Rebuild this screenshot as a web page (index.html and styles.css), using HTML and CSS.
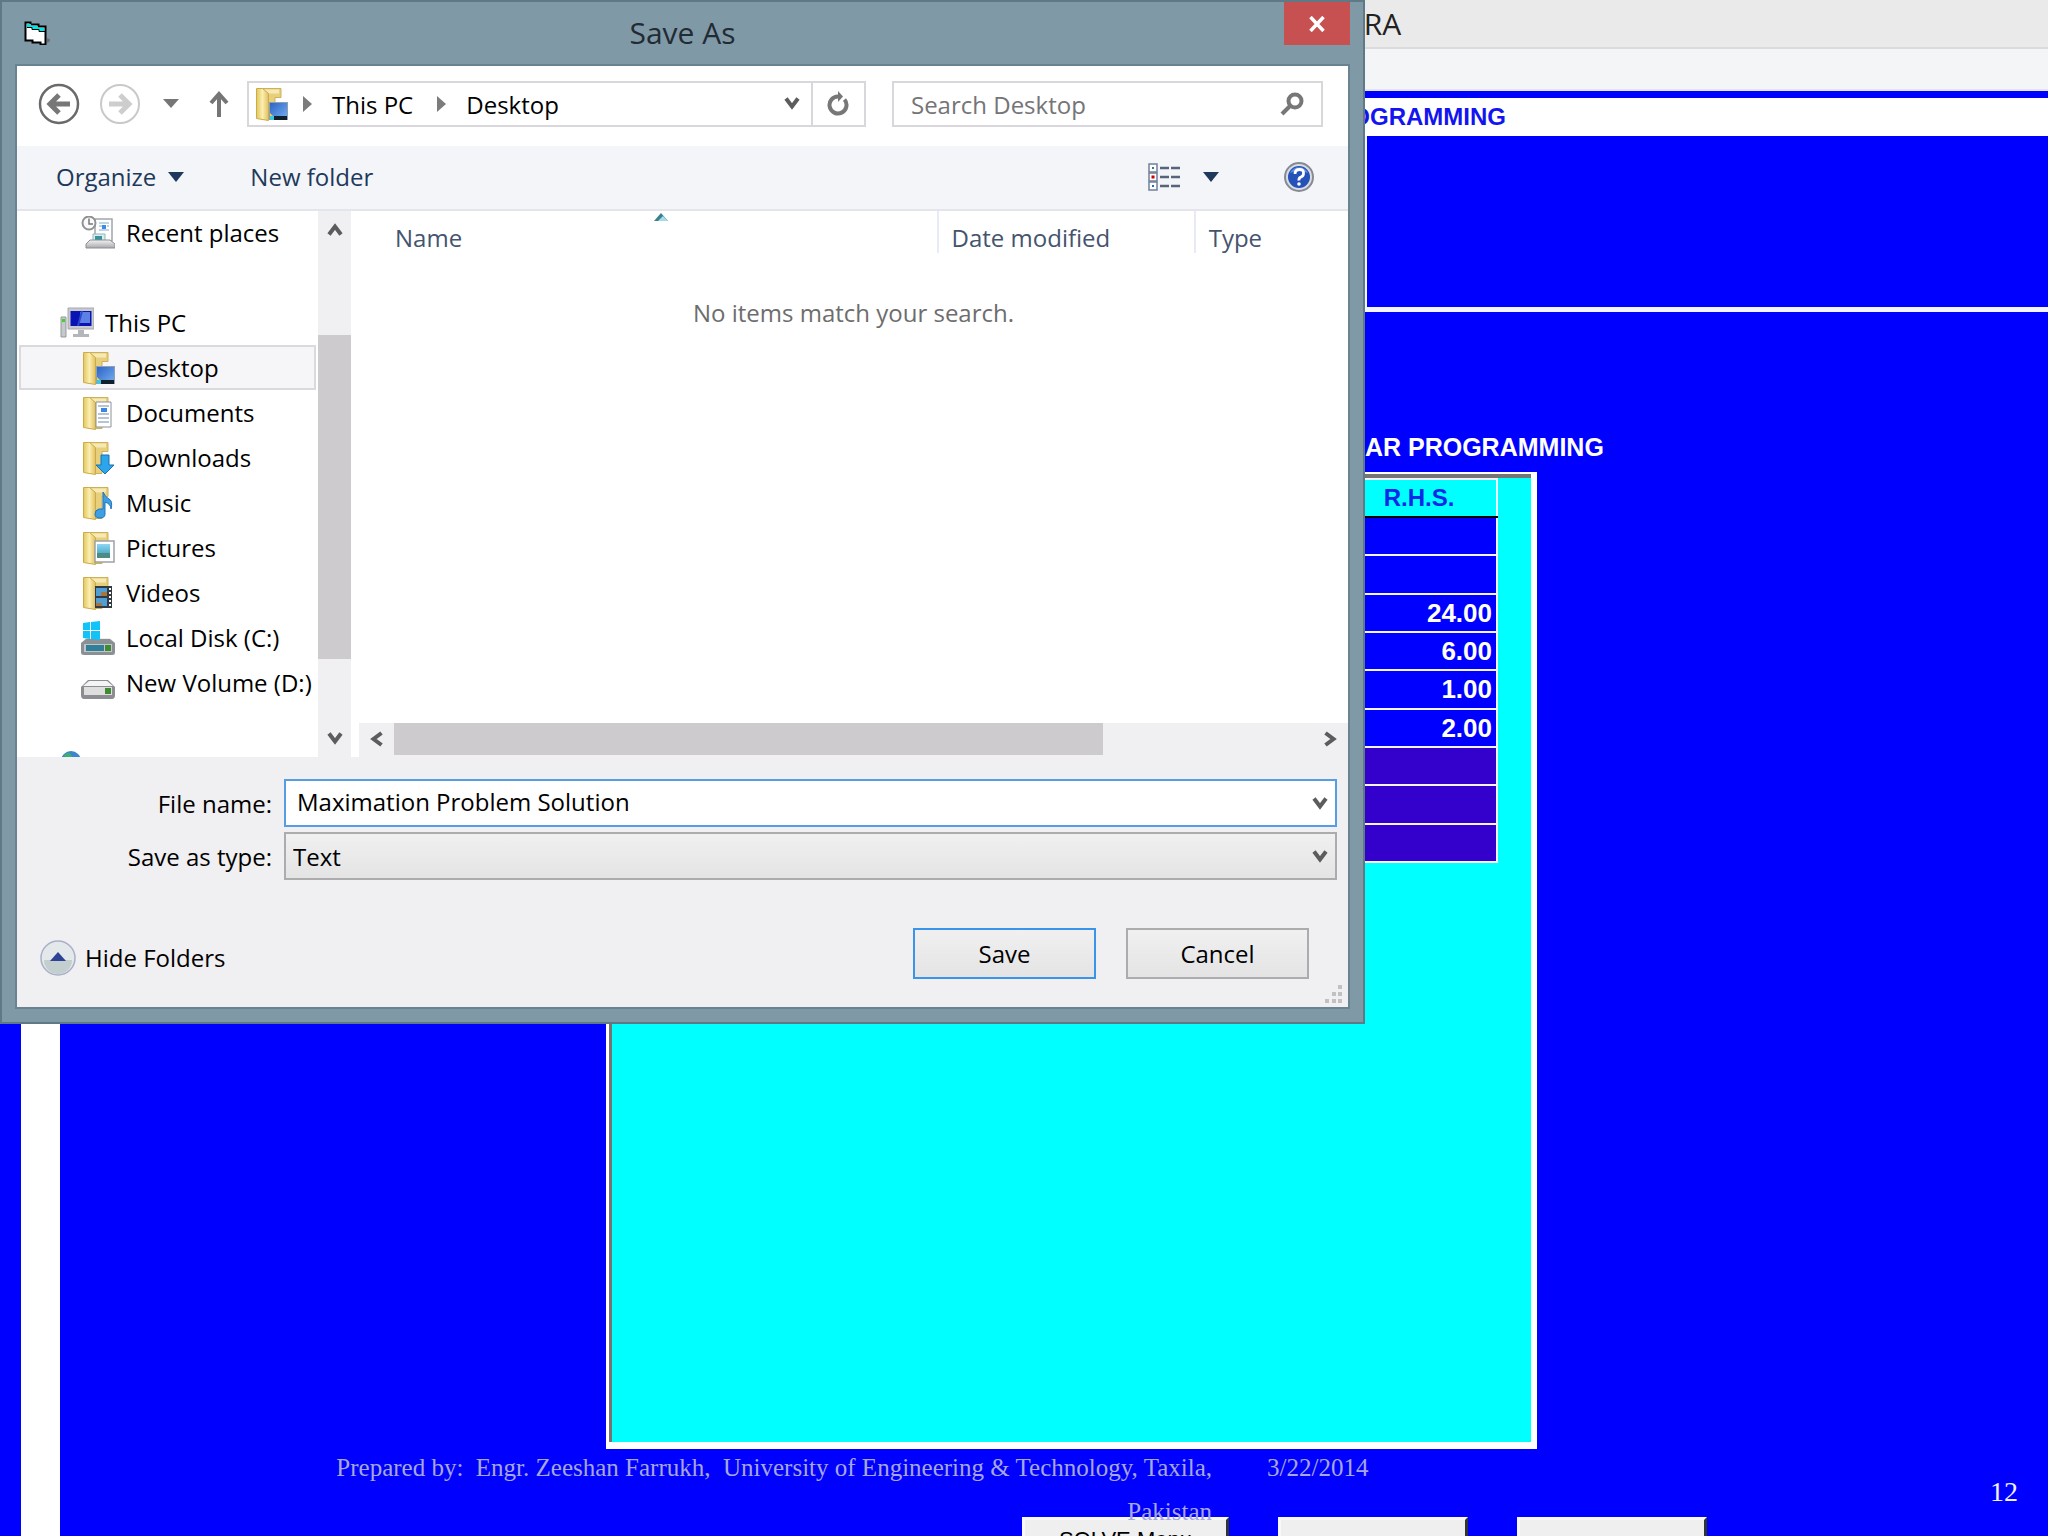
FILE: index.html
```html
<!DOCTYPE html>
<html lang="en">
<head>
    <meta charset="utf-8">
    <title>Save As</title>
    <link rel="stylesheet" href="styles.css">
</head>
<body>
    <!-- shared icon shapes -->
    <svg class="defs" aria-hidden="true">
        <defs>
            <linearGradient id="gold" x1="0" x2="1" y1="0" y2="0">
                <stop offset="0" stop-color="#e2c75e"/>
                <stop offset=".5" stop-color="#fbeeb0"/>
                <stop offset="1" stop-color="#e0c060"/>
            </linearGradient>
            <linearGradient id="screen" x1="0" x2="1" y1="0" y2="1">
                <stop offset="0" stop-color="#2a62c4"/>
                <stop offset="1" stop-color="#78b0f2"/>
            </linearGradient>
            <linearGradient id="metal" x1="0" x2="0" y1="0" y2="1">
                <stop offset="0" stop-color="#f2f2f2"/>
                <stop offset="1" stop-color="#a9a9ad"/>
            </linearGradient>
            <linearGradient id="sky" x1="0" x2="0" y1="0" y2="1">
                <stop offset="0" stop-color="#8fd6f4"/>
                <stop offset="1" stop-color="#2f9bb4"/>
            </linearGradient>
        </defs>
        <symbol id="folder" viewBox="0 0 34 34">
            <path d="M8 1.500h19v9h-6v22H8z" fill="#e8cf7c" stroke="#cdb05a"/>
            <path d="M9 2.500h16v4H9z" fill="#f6e9b4"/>
            <path d="M2.500 1.500h6l6 5V33.500L2.500 31.500z" fill="url(#gold)" stroke="#cdac48"/>
        </symbol>
        <symbol id="chev" viewBox="0 0 16 14">
            <path d="M2 1.500l6 8 6-8" fill="none" stroke="#5c5c5c" stroke-width="4"/>
        </symbol>
        <symbol id="desktop" viewBox="0 0 34 34">
            <use href="#folder"/>
            <rect x="15.500" y="15.500" width="18" height="17" fill="url(#screen)" stroke="#8f9fb4"/>
            <path d="M20 29h13v4H20z" fill="#10202c"/>
            <path d="M16 29h4v4h-4z" fill="#3ec5e0"/>
            <path d="M16 26l3 3h-3z" fill="#f2d042"/>
        </symbol>
    </svg>

    <div class="app">
        <header class="app-title">TORA</header>
        <div class="app-menu"></div>
        <div class="workspace">
            <div class="strip"></div>
            <main class="form">
                <h1 class="banner">LINEAR PROGRAMMING</h1>
                <div class="panel"></div>
                <h2 class="caption">LINEAR PROGRAMMING</h2>
                <div class="frame">
                    <table class="grid">
                        <thead><tr><th></th><th>R.H.S.</th></tr></thead>
                        <tbody>
                            <tr><td></td><td></td></tr>
                            <tr><td></td><td></td></tr>
                            <tr><td></td><td>24.00</td></tr>
                            <tr><td></td><td>6.00</td></tr>
                            <tr><td></td><td>1.00</td></tr>
                            <tr><td></td><td>2.00</td></tr>
                            <tr class="bound"><td></td><td></td></tr>
                            <tr class="bound"><td></td><td></td></tr>
                            <tr class="bound"><td></td><td></td></tr>
                        </tbody>
                    </table>
                </div>
                <div class="commands">
                    <button class="cmd cmd-wide">SOLVE Menu</button>
                    <button class="cmd" aria-label="Command 2"></button>
                    <button class="cmd" aria-label="Command 3"></button>
                </div>
            </main>
        </div>
    </div>

    <footer class="slide-note">
        <p class="credit">Prepared by:&nbsp; Engr. Zeeshan Farrukh,&nbsp; University of Engineering &amp; Technology, Taxila,<br>Pakistan</p>
        <p class="date">3/22/2014</p>
        <p class="page">12</p>
    </footer>

    <section class="dialog" role="dialog" aria-labelledby="dialog-title">
        <header class="titlebar">
            <svg class="form-icon" viewBox="0 0 26 24">
                <path d="M23 17l5 2-5 3z" fill="#6b6f72"/>
                <path d="M1.500 1.500h5v2h8v2h7v18h-5v-2h-8v-2h-7z" fill="#fff" stroke="#000" stroke-width="2"/>
                <path d="M3 3h4v2h7v2h6v3h-5V8H8V6H3z" fill="#00e5e5"/>
                <path d="M3 6.500h5v2h7v2h6" fill="none" stroke="#000" stroke-width="1"/>
            </svg>
            <h2 class="dialog-title" id="dialog-title">Save As</h2>
            <button class="close" aria-label="Close">
                <svg viewBox="0 0 18 16"><path d="M2.500 1l13 14M15.500 1l-13 14" stroke="#fff" stroke-width="3.500"/></svg>
            </button>
        </header>

        <div class="dialog-body">
            <div class="address-row">
                <button class="round" aria-label="Back">
                    <svg viewBox="0 0 42 42"><circle cx="21" cy="21" r="19" fill="#fff" stroke="#6a6a6a" stroke-width="2.500"/><path d="M32 21H13M21 12l-9 9 9 9" fill="none" stroke="#777" stroke-width="5"/></svg>
                </button>
                <button class="round" aria-label="Forward">
                    <svg viewBox="0 0 42 42"><circle cx="21" cy="21" r="19" fill="#fff" stroke="#c9c9c9" stroke-width="2"/><path d="M10 21h19M21 12l9 9-9 9" fill="none" stroke="#cdcdcd" stroke-width="5"/></svg>
                </button>
                <button class="plain recent" aria-label="Recent locations">
                    <svg viewBox="0 0 16 10"><path d="M0 0h16l-8 9z" fill="#767676"/></svg>
                </button>
                <button class="plain up" aria-label="Up">
                    <svg viewBox="0 0 20 26"><path d="M10 26V3M2 12l8-9 8 9" fill="none" stroke="#757575" stroke-width="4"/></svg>
                </button>
                <div class="address">
                    <svg class="icon" viewBox="0 0 34 34"><use href="#desktop"/></svg>
                    <svg class="crumb-arrow" viewBox="0 0 9 16"><path d="M0 0l9 8-9 8z" fill="#7c7c7c"/></svg>
                    <a class="crumb" href="#">This PC</a>
                    <svg class="crumb-arrow" viewBox="0 0 9 16"><path d="M0 0l9 8-9 8z" fill="#7c7c7c"/></svg>
                    <a class="crumb" href="#">Desktop</a>
                    <button class="plain history" aria-label="Previous locations"><svg class="chev" viewBox="0 0 16 14"><use href="#chev"/></svg></button>
                    <button class="plain refresh" aria-label="Refresh">
                        <svg viewBox="0 0 22 26"><path d="M17.500 8.500a8.500 8.500 0 1 1-6-3" fill="none" stroke="#777" stroke-width="4"/><path d="M11 0l5 5.500-5 5.500z" fill="#777"/></svg>
                    </button>
                </div>
                <div class="search">
                    <input class="search-input" type="text" placeholder="Search Desktop" aria-label="Search Desktop">
                    <svg class="search-icon" viewBox="0 0 24 24"><circle cx="15" cy="9" r="6.500" fill="none" stroke="#777" stroke-width="4"/><path d="M10 14l-8 8" stroke="#777" stroke-width="4"/></svg>
                </div>
            </div>

            <div class="toolbar">
                <button class="tool">Organize
                    <svg class="tri" viewBox="0 0 16 10"><path d="M0 0h16l-8 10z" fill="#1e395b"/></svg>
                </button>
                <button class="tool">New folder</button>
                <button class="plain views" aria-label="Change view">
                    <svg class="views-icon" viewBox="0 0 32 28">
                        <g fill="#fff" stroke="#70809a" stroke-width="1.500"><rect x="1" y="1" width="8" height="8"/><rect x="1" y="10" width="8" height="8"/><rect x="1" y="19" width="8" height="8"/></g>
                        <path d="M4 4h2v2H4z" fill="#3b7a80"/><path d="M3.500 12.500h3v3h-3z" fill="#c00"/><path d="M4 22h2v2H4z" fill="#2468d0"/>
                        <path d="M12 5h9M23 5h9M12 14h9M23 14h9M12 23h9M23 23h9" stroke="#56647c" stroke-width="2.500"/>
                    </svg>
                    <svg class="tri" viewBox="0 0 16 10"><path d="M0 0h16l-8 10z" fill="#1e395b"/></svg>
                </button>
                <button class="plain help" aria-label="Help">
                    <svg viewBox="0 0 30 30">
                        <circle cx="15" cy="15" r="14" fill="#d9dce2" stroke="#858a93" stroke-width="2"/>
                        <circle cx="15" cy="15" r="11" fill="#2552b8"/>
                        <path d="M6 11a10 10 0 0 1 18 0q-9-4-18 0z" fill="#5f8de0"/>
                        <path d="M11 12q0-4.500 4.500-4.500T19.500 11.500q0 2.500-2.500 3.500t-2 3.500" fill="none" stroke="#fff" stroke-width="2.800"/>
                        <circle cx="15" cy="22" r="1.800" fill="#fff"/>
                    </svg>
                </button>
            </div>

            <div class="panes">
                <nav class="tree">
                    <a class="node" href="#">
                        <svg class="icon" viewBox="0 0 34 34">
                            <path d="M14 3h17v22H14z" fill="#fff" stroke="#a3a7ab" stroke-width="1.500"/>
                            <path d="M18 7h10M18 10h3M26 10h2M18 14h10" stroke="#a9c8dc" stroke-width="1.500"/><path d="M21 9h4v4h-4z" fill="#3b8bea"/>
                            <path d="M12 18h12v9H12z" fill="#d4eef2" stroke="#9db0b6"/><path d="M14 20h7v4h-7z" fill="#36939e"/>
                            <path d="M9 24h20l5 4v4H5v-4z" fill="url(#metal)" stroke="#8c8e91"/>
                            <circle cx="8" cy="7" r="6.500" fill="#fafafa" stroke="#8f9295" stroke-width="2"/><path d="M8 2.500V8h4" fill="none" stroke="#777" stroke-width="1.500"/>
                        </svg>
                        Recent places</a>
                    <span class="node"></span>
                    <a class="node root" href="#">
                        <svg class="icon" viewBox="0 0 34 34">
                            <path d="M1 11h5v20H1z" fill="#c6c9cc" stroke="#96999c"/><path d="M2 13h3v3H2z" fill="#42d02c"/>
                            <path d="M8 2h26v21H8z" fill="#c8cacd" stroke="#a5a8ab"/><path d="M10.500 5h21v15h-21z" fill="#0a14b4"/>
                            <path d="M20 6h10v11H20z" fill="#5d80e4"/><path d="M22 5l-4 15" stroke="#2c48d0" stroke-width="2"/>
                            <path d="M18 24h6v4h5v3H13v-3h5z" fill="#b4b6b9"/>
                        </svg>
                        This PC</a>
                    <a class="node current" href="#"><svg class="icon" viewBox="0 0 34 34"><use href="#desktop"/></svg>Desktop</a>
                    <a class="node" href="#">
                        <svg class="icon" viewBox="0 0 34 34"><use href="#folder"/>
                            <path d="M15 6h15v25H15z" fill="#fff" stroke="#8b9298"/><path d="M17 10h11M17 18h11M17 22h11M17 26h11" stroke="#9fb2c4" stroke-width="1.500"/><path d="M20 12h6v4h-6z" fill="#3a86e0"/></svg>
                        Documents</a>
                    <a class="node" href="#">
                        <svg class="icon" viewBox="0 0 34 34"><use href="#folder"/>
                            <path d="M20 14h8v10h5l-9 9-9-9h5z" fill="#2da5ec" stroke="#1672b4"/></svg>
                        Downloads</a>
                    <a class="node" href="#">
                        <svg class="icon" viewBox="0 0 34 34"><use href="#folder"/>
                            <path d="M22 6q2 5 6 7t2 10q0-5-6-7v12q0 4-5 4t-5-4 4-5h4z" fill="#3f9fe4" stroke="#1c74bc"/></svg>
                        Music</a>
                    <a class="node" href="#">
                        <svg class="icon" viewBox="0 0 34 34"><use href="#folder"/>
                            <path d="M14 10h19v21H14z" fill="#fff" stroke="#9da1a6" stroke-width="1.500"/><path d="M16 13h13v14H16z" fill="url(#sky)"/><path d="M16 22h13v5H16z" fill="#4d8c84"/></svg>
                        Pictures</a>
                    <a class="node" href="#">
                        <svg class="icon" viewBox="0 0 34 34"><use href="#folder"/>
                            <path d="M14 10h17v22H14z" fill="#343a42"/><path d="M15 12h11v8H15zM15 22h11v8H15z" fill="#4f9fd6"/><path d="M20 16h6v4h-6zM15 27h6v3h-6z" fill="#a8753c"/>
                            <path d="M29 12v19" stroke="#fff" stroke-width="2" stroke-dasharray="2 2"/></svg>
                        Videos</a>
                    <a class="node" href="#">
                        <svg class="icon" viewBox="0 0 34 34">
                            <path d="M5 17h24l5 5v12H0V22z" fill="#ececee"/><path d="M0 22l5-4h24l5 4v9q0 3-3 3H3q-3 0-3-3z" fill="#8b9094"/>
                            <path d="M3 23h28v8H3z" fill="#bfc5c9"/><path d="M5 24h18v6H5z" fill="#2f7f98"/><path d="M24 24h6v6h-6z" fill="#3f8a32"/>
                            <path d="M2 2l7-1v8H2zM10 1l9-1v9h-9zM2 10h7v8l-7-1zM10 10h9v9l-9-1z" fill="#10c4fa"/></svg>
                        Local Disk (C:)</a>
                    <a class="node" href="#">
                        <svg class="icon" viewBox="0 0 34 34">
                            <path d="M0 21l7-7h20l7 7v8q0 4-3 4H3q-3 0-3-4z" fill="#8b8d90"/><path d="M2 20l6-5h18l6 5z" fill="#f4f4f5"/>
                            <path d="M3 21h28v8H3z" fill="#dededf"/><path d="M24 22h6v6h-6z" fill="#3f8a32"/></svg>
                        New Volume (D:)</a>
                    <span class="node"></span>
                    <a class="node root network" href="#" aria-label="Network"><svg class="icon" viewBox="0 0 34 34"><circle cx="11" cy="10" r="10" fill="#3a86c8"/><path d="M4 4q6-5 8 2H5z" fill="#3fae74"/></svg></a>
                </nav>
                <div class="vscroll">
                    <button class="plain scroll-btn" aria-label="Scroll up"><svg class="chev flip" viewBox="0 0 16 14"><use href="#chev"/></svg></button>
                    <div class="vtrack"><div class="vthumb"></div></div>
                    <button class="plain scroll-btn" aria-label="Scroll down"><svg class="chev" viewBox="0 0 16 14"><use href="#chev"/></svg></button>
                </div>
                <div class="files">
                    <div class="columns">
                        <button class="col col-name">Name<svg class="sort" viewBox="0 0 14 8"><path d="M0 8l7-8 7 8z" fill="#3c7f8c"/><path d="M4 8l5-5 5 5z" fill="#a4dbe6"/></svg></button>
                        <button class="col col-date">Date modified</button>
                        <button class="col col-type">Type</button>
                    </div>
                    <p class="empty">No items match your search.</p>
                    <div class="hscroll">
                        <button class="plain scroll-btn" aria-label="Scroll left"><svg class="chev left" viewBox="0 0 16 14"><use href="#chev"/></svg></button>
                        <div class="htrack"><div class="hthumb"></div></div>
                        <button class="plain scroll-btn" aria-label="Scroll right"><svg class="chev right" viewBox="0 0 16 14"><use href="#chev"/></svg></button>
                    </div>
                </div>
            </div>

            <form class="save-form">
                <label class="field-label" for="file-name">File name:</label>
                <div class="combo">
                    <input class="field" id="file-name" type="text" value="Maximation Problem Solution">
                    <svg class="chev" viewBox="0 0 16 14"><use href="#chev"/></svg>
                </div>
                <label class="field-label" for="file-type">Save as type:</label>
                <div class="combo">
                    <select class="field field-select" id="file-type"><option>Text</option></select>
                    <svg class="chev" viewBox="0 0 16 14"><use href="#chev"/></svg>
                </div>
                <div class="actions">
                    <button class="plain hide" type="button">
                        <svg viewBox="0 0 36 36"><circle cx="18" cy="18" r="17" fill="#e3e8ea" stroke="#abb0c8" stroke-width="1.500"/><path d="M4 20h28a14 14 0 0 1-28 0z" fill="#c3cecf"/><path d="M10 21l8-9 8 9z" fill="#2f4394"/></svg>
                        Hide Folders
                    </button>
                    <button class="push default" type="submit">Save</button>
                    <button class="push" type="button">Cancel</button>
                </div>
                <svg class="grip" viewBox="0 0 18 18"><path d="M13 0h4v4h-4zM7 7h4v4H7zM13 7h4v4h-4zM0 14h4v4H0zM7 14h4v4H7zM13 14h4v4h-4z" fill="#c1c0c2"/></svg>
            </form>
        </div>
    </section>
</body>
</html>
```
FILE: styles.css
```css
* {
    box-sizing: border-box;
}

body {
    margin: 0;
    height: 100vh;
    overflow: hidden;
    position: relative;
    background-color: #0000ff;
    font-family: "Open Sans", "Noto Sans", sans-serif;
    font-size: 24px;
    color: #000;
}

h1, h2, p {
    margin: 0;
    font-weight: normal;
}

a {
    color: inherit;
    text-decoration: none;
}

button, input, select {
    font: inherit;
    color: inherit;
    border: none;
    border-radius: 0;
    margin: 0;
    padding: 0;
}

svg {
    display: block;
    flex: none;
}

.defs {
    position: absolute;
    width: 0;
    height: 0;
}

/* ---- application behind the dialog ---- */
.app {
    display: flex;
    flex-direction: column;
    height: 100vh;
    overflow: hidden;
}

.app-title {
    height: 49px;
    padding-left: 1324px;
    border-bottom: 2px solid #dcdadc;
    background-color: #ebeaeb;
    font-size: 30px;
    line-height: 48px;
    color: #222;
}

.app-menu {
    height: 42px;
    border-bottom: 2px solid #e4e4ea;
    background-color: #f4f5f7;
}

.workspace {
    display: flex;
    flex: 1;
    min-height: 0;
}

.strip {
    width: 39px;
    margin-left: 21px;
    background-color: #fff;
}

.form {
    display: flex;
    flex-direction: column;
    flex: 1;
    padding-top: 7px;
}

.banner {
    height: 38px;
    padding-left: 1162px;
    background-color: #fff;
    font: bold 24px/38px "Liberation Sans", Arial, sans-serif;
    color: #1414f0;
}

.panel {
    height: 176px;
    margin-left: 1304px;
    border-left: 3px solid #f4f4ff;
    border-bottom: 5px solid #f4f4ff;
}

.caption {
    height: 160px;
    padding: 120px 0 0 1248px;
    font: bold 25px/30px "Liberation Sans", Arial, sans-serif;
    color: #fff;
}

.frame {
    flex: 1;
    margin: 0 calc(25% + 14px) 0 546px;
    border: solid #fff;
    border-width: 2px 6px 7px 3px;
    background-color: #00ffff;
    box-shadow: inset 3px 4px 0 #757575;
    padding: 4px 33px 0 3px;
}

.grid {
    width: 100%;
    height: 385px;
    border-collapse: collapse;
    font: bold 26px/28px "Liberation Sans", Arial, sans-serif;
    color: #fff;
}

.grid th,
.grid td {
    height: 38px;
    padding: 0 4px;
    border: 2px solid #f4f4ff;
    background-color: #0000ff;
    text-align: right;
}

.grid th {
    border-bottom-color: #000;
    background-color: #00ffff;
    font-size: 24px;
    text-align: center;
    color: #0a28e8;
}

.grid th:last-child {
    width: 156px;
}

.grid .bound td {
    background-color: #3300cc;
}

.commands {
    display: flex;
    gap: 49px;
    height: 19px;
    margin: 68px 0 0 962px;
}

.cmd {
    width: 190px;
    height: 60px;
    border: 3px outset #f8f8f8;
    border-right-color: #808888;
    background-color: #eeefee;
}

.cmd-wide {
    width: 207px;
    padding-bottom: 14px;
    font: 22px/24px "Liberation Sans", Arial, sans-serif;
}

/* ---- slide footer ---- */
.slide-note {
    position: absolute;
    left: 0;
    right: 30px;
    bottom: 0;
    display: flex;
    align-items: flex-start;
    height: 90px;
    overflow: hidden;
    font: 25px/44px "Liberation Serif", "Times New Roman", serif;
    color: #a6a6e0;
}

.credit {
    width: 1212px;
    text-align: right;
}

.date {
    margin-left: 55px;
}

.page {
    margin: 24px 0 0 auto;
    font-size: 28px;
    color: #f0f0ff;
}

/* ---- Save As dialog ---- */
.dialog {
    position: absolute;
    top: 0;
    left: 0;
    width: 66.65vw;
    border: 2px solid #5f7985;
    padding: 0 13px 13px;
    background-color: #8099a7;
}

.titlebar {
    display: grid;
    grid-template-columns: 66px 1fr 66px;
    height: 62px;
    margin-right: -13px;
    padding-right: 13px;
}

.form-icon {
    width: 26px;
    height: 24px;
    margin: 19px 0 0 9px;
}

.dialog-title {
    font-size: 30px;
    line-height: 62px;
    text-align: center;
    color: #222b33;
}

.close {
    display: flex;
    align-items: center;
    justify-content: center;
    height: 43px;
    background-color: #c75050;
}

.close svg {
    width: 18px;
    height: 16px;
}

.dialog-body {
    border: 2px solid #6a8390;
    background-color: #fff;
}

.plain {
    display: flex;
    align-items: center;
    justify-content: center;
    background: none;
}

.icon {
    width: 34px;
    height: 34px;
}

.chev {
    width: 16px;
    height: 14px;
}

.flip {
    transform: rotate(180deg);
}

.left {
    transform: rotate(90deg);
}

.right {
    transform: rotate(-90deg);
}

.tri {
    width: 16px;
    height: 10px;
}

.address-row {
    display: flex;
    align-items: center;
    height: 80px;
    padding: 0 25px 4px 21px;
}

.round {
    margin-right: 19px;
    background: none;
}

.round svg {
    width: 42px;
    height: 42px;
}

.recent svg {
    width: 16px;
    height: 10px;
}

.recent {
    margin-left: 3px;
}

.up {
    margin: 0 18px 0 30px;
}

.up svg {
    width: 20px;
    height: 26px;
}

.address {
    display: flex;
    align-items: center;
    flex: 1;
    height: 46px;
    padding-left: 5px;
    border: 2px solid #d9d7dc;
}

.crumb-arrow {
    width: 9px;
    height: 16px;
    margin: 0 20px 0 15px;
}

.crumb + .crumb-arrow {
    margin-left: 24px;
}

.history {
    margin-left: auto;
    padding-right: 11px;
}

.refresh {
    width: 53px;
    height: 42px;
    border-left: 2px solid #d9d7dc;
}

.refresh svg {
    width: 22px;
    height: 26px;
}

.search {
    display: flex;
    align-items: center;
    width: 431px;
    height: 46px;
    margin-left: 26px;
    padding: 0 17px;
    border: 2px solid #d9d7dc;
}

.search-input {
    flex: 1;
    min-width: 0;
    outline: none;
}

.search-input::placeholder {
    color: #757477;
    opacity: 1;
}

.search-icon {
    width: 24px;
    height: 24px;
}

.toolbar {
    display: flex;
    align-items: center;
    height: 65px;
    padding: 0 34px 2px 39px;
    border-bottom: 2px solid #e4e5ea;
    background-color: #f4f5f8;
}

.tool {
    display: flex;
    align-items: center;
    gap: 12px;
    margin-right: 66px;
    background: none;
    color: #1e395b;
}

.views {
    gap: 23px;
    margin: 0 65px 0 auto;
}

.views-icon {
    width: 32px;
    height: 28px;
}

.help svg {
    width: 30px;
    height: 30px;
}

.panes {
    display: flex;
    height: 546px;
}

.tree {
    width: 301px;
    overflow: hidden;
}

.node {
    display: flex;
    align-items: center;
    gap: 11px;
    height: 45px;
    margin: 0 2px;
    padding-left: 61px;
    border: 1px solid transparent;
    white-space: nowrap;
}

.node:first-child {
    margin-top: -1px;
}

.root {
    padding-left: 40px;
}

.current {
    border: 2px solid #dadade;
    padding-left: 60px;
    background-color: #f6f5f7;
}

.network {
    align-items: flex-start;
}

.vscroll {
    display: flex;
    flex-direction: column;
    width: 33px;
    background-color: #f0eff1;
}

.scroll-btn {
    flex: none;
    width: 33px;
    height: 36px;
}

.vtrack {
    flex: 1;
    padding-top: 88px;
}

.vthumb {
    height: 84%;
    background-color: #cdcbce;
}

.files {
    display: flex;
    flex-direction: column;
    flex: 1;
    margin-left: 8px;
}

.columns {
    display: grid;
    grid-template-columns: 58.6% 26% 1fr;
    height: 42px;
    color: #44546e;
}

.col {
    position: relative;
    padding: 12px 0 0 13px;
    border-right: 2px solid #e6ebf4;
    background: none;
    line-height: 30px;
    text-align: left;
}

.col-name {
    padding-left: 36px;
}

.col-type {
    border-right: none;
}

.sort {
    position: absolute;
    top: 2px;
    left: 51%;
    width: 14px;
    height: 8px;
}

.empty {
    flex: 1;
    padding-top: 43px;
    text-align: center;
    line-height: 34px;
    color: #6d6d6d;
}

.hscroll {
    display: flex;
    height: 34px;
    background-color: #f0eff1;
}

.hscroll .scroll-btn {
    height: 32px;
}

.htrack {
    flex: 1;
    padding-left: 2px;
}

.hthumb {
    width: 77%;
    height: 32px;
    background-color: #cdcbce;
}

.save-form {
    position: relative;
    display: grid;
    grid-template-columns: 255px 1fr;
    align-items: center;
    gap: 5px 12px;
    padding: 22px 11px 28px 0;
    background-color: #f0eff1;
}

.field-label {
    text-align: right;
}

.combo {
    position: relative;
}

.combo .chev {
    position: absolute;
    top: 18px;
    right: 9px;
    pointer-events: none;
}

.field {
    display: block;
    width: 100%;
    height: 48px;
    padding: 0 40px 4px 11px;
    border: 2px solid #569de5;
    background-color: #fff;
    outline: none;
}

.field-select {
    appearance: none;
    padding: 0 40px 0 7px;
    border-color: #acabad;
    background: linear-gradient(#f0f0f1, #e4e4e5);
}

.actions {
    grid-column: 1 / -1;
    display: flex;
    align-items: center;
    gap: 30px;
    margin-top: 43px;
    padding: 0 28px 0 23px;
}

.hide {
    gap: 9px;
    margin: 8px auto 0 0;
}

.hide svg {
    width: 36px;
    height: 36px;
}

.push {
    width: 183px;
    height: 51px;
    border: 2px solid #acabad;
    background: linear-gradient(#f0f0f1, #e4e4e5);
}

.default {
    border-color: #3b94ec;
}

.grip {
    position: absolute;
    right: 5px;
    bottom: 4px;
    width: 18px;
    height: 18px;
}
```
